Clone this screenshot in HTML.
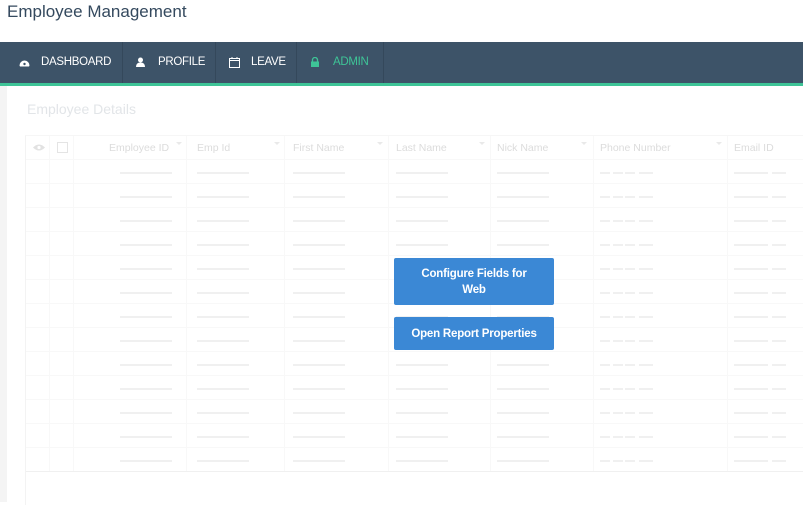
<!DOCTYPE html>
<html><head><style>
*{margin:0;padding:0;box-sizing:border-box}
body{width:803px;height:502px;overflow:hidden;background:#fff;font-family:"Liberation Sans",sans-serif;position:relative}
.title{position:absolute;left:7px;top:2px;font-size:17px;color:#34495e}
.nav{position:absolute;left:0;top:42px;width:803px;height:41px;background:#3d5368}
.green{position:absolute;left:0;top:83px;width:803px;height:3px;background:#3ec497}
.div{position:absolute;top:0;width:1px;height:41px;background:#34485b}
.item{position:absolute;top:14px;font-size:11.5px;color:#fff;letter-spacing:-0.3px}
.ic{position:absolute;top:15px}
.strip{position:absolute;left:0;top:86px;width:7px;height:416px;background:#f4f4f4}
.h2{position:absolute;left:27px;top:101px;font-size:14px;color:#e2e5e8}
.tbl{position:absolute;left:25px;top:135px;width:780px;height:370px;border-left:1px solid #f3f3f3;border-top:1px solid #f6f6f6}
.hl{position:absolute;left:0;width:780px;height:1px;background:#f8f8f8}
.vl{position:absolute;top:0;width:1px;height:335px;background:#f8f8f8}
.th{position:absolute;top:6px;font-size:10.5px;color:#dcdcdc}
.ar{position:absolute;top:6px;width:0;height:0;border-left:3px solid transparent;border-right:3px solid transparent;border-top:3px solid #e9e9e9}
.d{position:absolute;height:2px;background:#f0f0f0}
.btn{position:absolute;left:394px;width:160px;background:#3b88d5;color:#fff;font-size:11.5px;font-weight:bold;text-align:center;border-radius:2px;line-height:16px;letter-spacing:-0.2px}
</style></head><body>
<div class="title">Employee Management</div>
<div class="nav">
<div class="div" style="left:122px"></div><div class="div" style="left:215px"></div><div class="div" style="left:296px"></div><div class="div" style="left:383px"></div>
<svg class="ic" style="left:19px" width="11" height="10" viewBox="0 0 11 10"><path d="M0.5 8.5A5 5 0 0 1 10.5 8.5L10 9.5H1Z" fill="#fff"/><circle cx="5.5" cy="7" r="1.2" fill="#3d5368"/></svg>
<div class="item" style="left:41px">DASHBOARD</div>
<svg class="ic" style="left:136px" width="9" height="10" viewBox="0 0 9 10"><circle cx="4.5" cy="3" r="2.5" fill="#fff"/><path d="M0 10Q0 5.5 4.5 5.5Q9 5.5 9 10Z" fill="#fff"/></svg>
<div class="item" style="left:158px">PROFILE</div>
<svg class="ic" style="left:229px" width="11" height="11" viewBox="0 0 11 11"><rect x="0.5" y="1.5" width="10" height="9" fill="none" stroke="#fff"/><line x1="0.5" y1="3.5" x2="10.5" y2="3.5" stroke="#fff"/><line x1="3" y1="0" x2="3" y2="2" stroke="#fff"/><line x1="8" y1="0" x2="8" y2="2" stroke="#fff"/></svg>
<div class="item" style="left:251px">LEAVE</div>
<svg class="ic" style="left:311px" width="8" height="10" viewBox="0 0 8 10"><path d="M1.5 4.5V3A2.5 2.5 0 0 1 6.5 3V4.5" fill="none" stroke="#3ec497" stroke-width="1.3"/><rect x="0" y="4.5" width="8" height="5.5" fill="#3ec497"/></svg>
<div class="item" style="left:333px;color:#3ec497">ADMIN</div>
</div>
<div class="green"></div>
<div class="strip"></div>
<div class="h2">Employee Details</div>
<div class="tbl">
<div class="hl" style="top:23px"></div>
<div class="hl" style="top:47px"></div><div class="hl" style="top:71px"></div><div class="hl" style="top:95px"></div><div class="hl" style="top:119px"></div><div class="hl" style="top:143px"></div><div class="hl" style="top:167px"></div><div class="hl" style="top:191px"></div><div class="hl" style="top:215px"></div><div class="hl" style="top:239px"></div><div class="hl" style="top:263px"></div><div class="hl" style="top:287px"></div><div class="hl" style="top:311px"></div><div class="hl" style="top:335px;background:#f0f0f0"></div>
<div class="vl" style="left:23px"></div><div class="vl" style="left:47px"></div><div class="vl" style="left:160px"></div><div class="vl" style="left:258px"></div><div class="vl" style="left:362px"></div><div class="vl" style="left:464px"></div><div class="vl" style="left:567px"></div><div class="vl" style="left:701px"></div>
<svg style="position:absolute;left:7px;top:8px" width="12" height="7" viewBox="0 0 12 7"><path d="M0 3.5Q6 -2.5 12 3.5Q6 9.5 0 3.5Z" fill="#e2e2e2"/><circle cx="6" cy="3.5" r="1.6" fill="#fff"/></svg>
<div style="position:absolute;left:31px;top:6px;width:11px;height:11px;border:1px solid #e4e4e4"></div>
<div class="th" style="left:83px">Employee ID</div><div class="ar" style="left:150px"></div>
<div class="th" style="left:171px">Emp Id</div><div class="ar" style="left:248px"></div>
<div class="th" style="left:267px">First Name</div><div class="ar" style="left:351px"></div>
<div class="th" style="left:370px">Last Name</div><div class="ar" style="left:453px"></div>
<div class="th" style="left:471px">Nick Name</div><div class="ar" style="left:555px"></div>
<div class="th" style="left:574px">Phone Number</div><div class="ar" style="left:690px"></div>
<div class="th" style="left:708px">Email ID</div>
<div id="rows"></div>
</div>
<div class="btn" style="top:258px;height:47px;padding-top:8px">Configure Fields for<br>Web</div>
<div class="btn" style="top:317px;height:33px;padding-top:9px">Open Report Properties</div>
<script>
var r=document.getElementById('rows'),h='';
var cols=[[94,52],[171,52],[267,52],[370,52],[471,52],[708,34],[746,14]];
for(var i=0;i<13;i++){var y=36+i*24;
cols.forEach(function(c){h+='<div class="d" style="left:'+c[0]+'px;top:'+y+'px;width:'+c[1]+'px"></div>';});
[[574,10],[587,10],[599,10],[613,14]].forEach(function(c){h+='<div class="d" style="left:'+c[0]+'px;top:'+y+'px;width:'+c[1]+'px"></div>';});}
r.innerHTML=h;
</script>
</body></html>
